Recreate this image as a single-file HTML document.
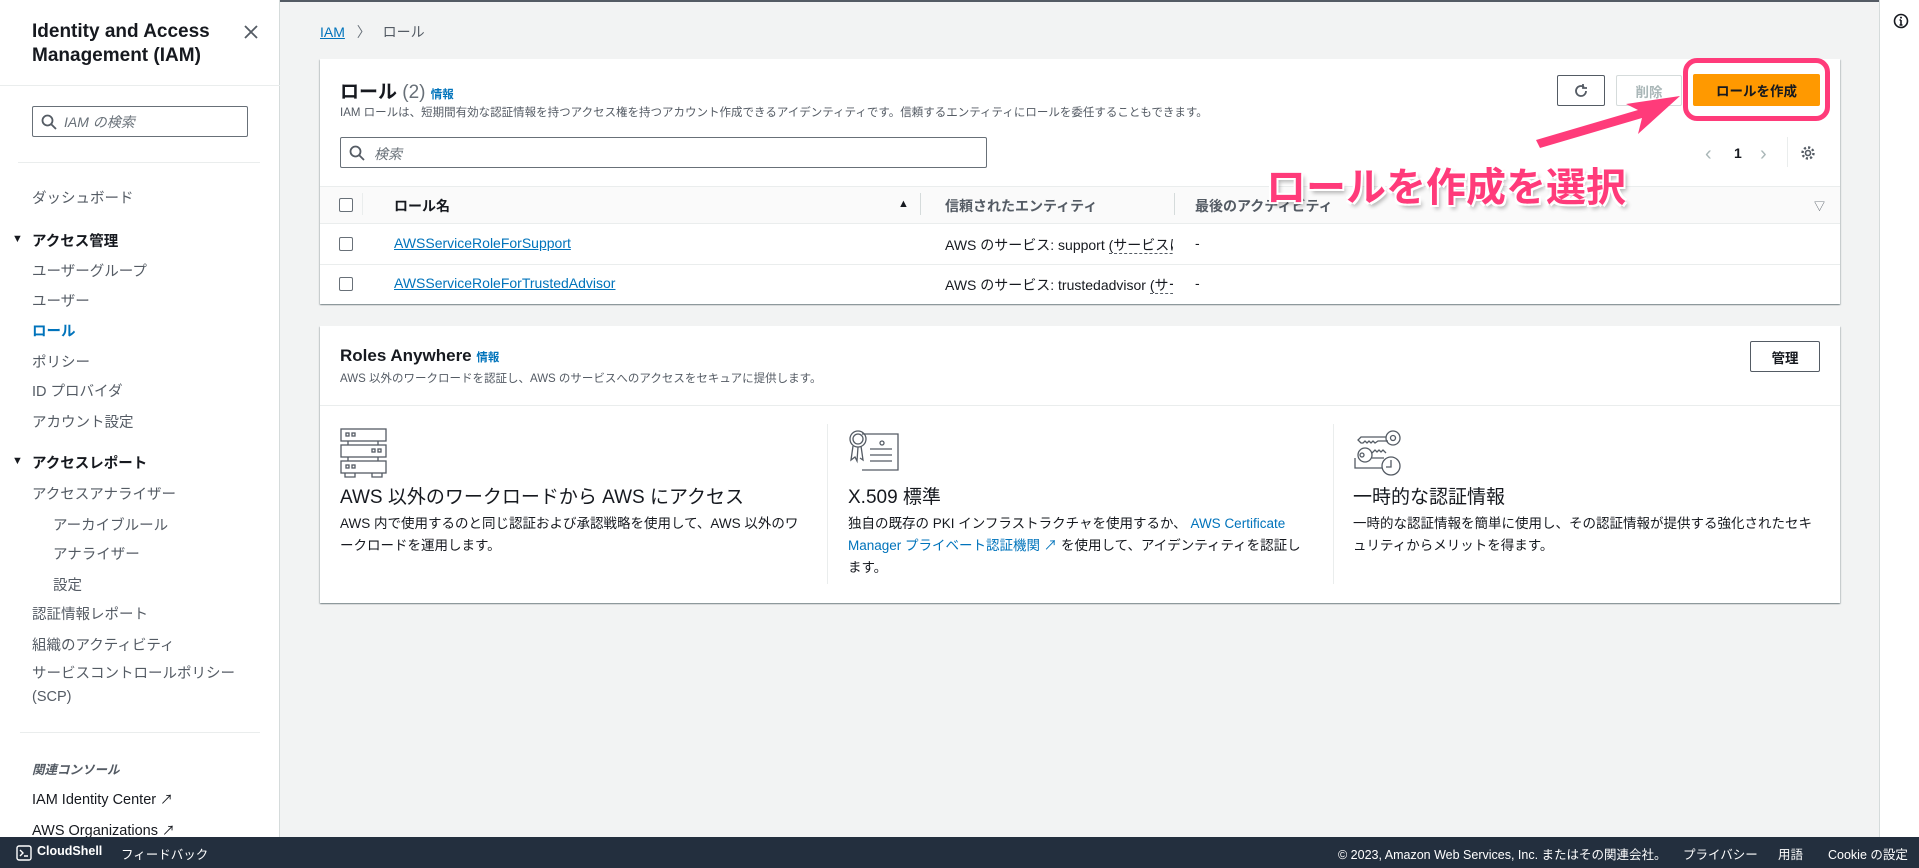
<!DOCTYPE html>
<html><head><meta charset="utf-8"><style>
*{box-sizing:border-box;margin:0;padding:0}
body{width:1919px;height:868px;overflow:hidden;position:relative;background:#f2f3f3;font-family:"Liberation Sans","Noto Sans CJK JP",sans-serif;color:#16191f}
.a{position:absolute;white-space:nowrap}
#side{position:absolute;left:0;top:0;width:280px;height:837px;background:#fff;border-right:1px solid #d5dbdb}
.nav{font-size:14.5px;color:#545b64;left:32px}
.sub{left:53px}
.hd{font-weight:bold;color:#16191f;left:32px}
.tri{left:12px;font-size:11px;color:#16191f}
.card{position:absolute;background:#fff;box-shadow:0 1px 1px rgba(0,28,36,.3),1px 1px 1px rgba(0,28,36,.15),-1px 1px 1px rgba(0,28,36,.15)}
.hline{position:absolute;height:1px;background:#eaeded}
.cb{position:absolute;width:14px;height:14px;border:1.5px solid #687078;border-radius:2px;background:#fff}
.link{color:#0073bb;text-decoration:underline}
.btn{position:absolute;border:1px solid #545b64;background:#fff;border-radius:2px;font-weight:bold;font-size:13.5px;display:flex;align-items:center;justify-content:center}
.desc{font-size:12px;color:#545b64}
.t{font-size:19px;color:#16191f}
.b{font-size:13.5px;line-height:22px;color:#16191f;white-space:normal}
</style></head><body>
<div style="position:absolute;left:0;top:0;width:1919px;height:2px;background:#545b64"></div>
<div id="side">
<div class="a" style="left:32px;top:20px;font-size:19px;font-weight:bold;line-height:24px">Identity and Access<br>Management (IAM)</div>
<svg class="a" style="left:243px;top:24px" width="16" height="16" viewBox="0 0 16 16"><path d="M2 2L14 14M14 2L2 14" stroke="#545b64" stroke-width="1.8"/></svg>
<div class="hline" style="left:0;top:85px;width:280px"></div>
<div class="a" style="left:32px;top:106px;width:216px;height:31px;border:1px solid #687078;border-radius:2px"></div>
<svg class="a" style="left:41px;top:114px" width="16" height="16" viewBox="0 0 16 16"><circle cx="6.5" cy="6.5" r="5" fill="none" stroke="#545b64" stroke-width="1.8"/><path d="M10 10L15 15" stroke="#545b64" stroke-width="1.8"/></svg>
<div class="a" style="left:64px;top:112px;font-size:14px;font-style:italic;color:#687078">IAM の検索</div>
<div class="hline" style="left:18px;top:162px;width:242px"></div>
<div class="a nav" style="top:187px">ダッシュボード</div>
<div class="a tri" style="top:233px">▼</div><div class="a nav hd" style="top:230px">アクセス管理</div>
<div class="a nav" style="top:260px">ユーザーグループ</div>
<div class="a nav" style="top:290px">ユーザー</div>
<div class="a nav" style="top:320px;color:#0073bb;font-weight:bold">ロール</div>
<div class="a nav" style="top:351px">ポリシー</div>
<div class="a nav" style="top:380px">ID プロバイダ</div>
<div class="a nav" style="top:411px">アカウント設定</div>
<div class="a tri" style="top:455px">▼</div><div class="a nav hd" style="top:452px">アクセスレポート</div>
<div class="a nav" style="top:483px">アクセスアナライザー</div>
<div class="a nav sub" style="top:514px">アーカイブルール</div>
<div class="a nav sub" style="top:543px">アナライザー</div>
<div class="a nav sub" style="top:574px">設定</div>
<div class="a nav" style="top:603px">認証情報レポート</div>
<div class="a nav" style="top:634px">組織のアクティビティ</div>
<div class="a nav" style="top:663px;line-height:23px">サービスコントロールポリシー<br>(SCP)</div>
<div class="hline" style="left:20px;top:732px;width:240px"></div>
<div class="a nav" style="top:759px;font-size:12.5px;font-style:italic;font-weight:bold">関連コンソール</div>
<div class="a nav" style="top:789px;color:#16191f">IAM Identity Center <span style="font-size:13px">↗</span></div>
<div class="a nav" style="top:820px;color:#16191f">AWS Organizations <span style="font-size:13px">↗</span></div>
</div>

<div class="a" style="left:320px;top:22px;font-size:14px"><span class="link">IAM</span> <span style="color:#687078;margin:0 8px">〉</span> <span style="color:#545b64">ロール</span></div>

<!-- card 1 -->
<div class="card" style="left:320px;top:59px;width:1520px;height:245px">
<div class="a" style="left:20px;top:18px;font-size:19px;font-weight:bold">ロール <span style="font-weight:normal;color:#687078">(2)</span> <span style="font-size:11.5px;color:#0073bb">情報</span></div>
<div class="a desc" style="left:20px;top:45px;font-size:11.5px">IAM ロールは、短期間有効な認証情報を持つアクセス権を持つアカウント作成できるアイデンティティです。信頼するエンティティにロールを委任することもできます。</div>
<div class="a" style="left:20px;top:78px;width:647px;height:31px;border:1px solid #687078;border-radius:2px"></div>
<svg class="a" style="left:29px;top:86px" width="16" height="16" viewBox="0 0 16 16"><circle cx="6.5" cy="6.5" r="5" fill="none" stroke="#545b64" stroke-width="1.8"/><path d="M10 10L15 15" stroke="#545b64" stroke-width="1.8"/></svg>
<div class="a" style="left:54px;top:85px;font-size:14px;font-style:italic;color:#687078">検索</div>
<div class="a" style="left:1385px;top:84px;font-size:20px;color:#aab7b8">‹</div>
<div class="a" style="left:1414px;top:86px;font-size:14px;font-weight:bold">1</div>
<div class="a" style="left:1440px;top:84px;font-size:20px;color:#aab7b8">›</div>
<div class="a" style="left:1467px;top:78px;width:1px;height:30px;background:#eaeded"></div>
<svg class="a" style="left:1480px;top:86px" width="16" height="16" viewBox="0 0 16 16"><circle cx="8" cy="8" r="2.5" fill="none" stroke="#545b64" stroke-width="1.6"/><circle cx="8" cy="8" r="5.5" fill="none" stroke="#545b64" stroke-width="2.4" stroke-dasharray="2.2 2.1"/></svg>
<div class="a" style="left:0;top:127px;width:1520px;height:38px;background:#fafafa;border-top:1px solid #eaeded;border-bottom:1px solid #eaeded"></div>
<div class="cb" style="left:19px;top:139px"></div>
<div class="a" style="left:42px;top:134px;width:1px;height:22px;background:#eaeded"></div>
<div class="a" style="left:74px;top:137px;font-size:14px;font-weight:bold">ロール名</div>
<div class="a" style="left:578px;top:139px;font-size:11px">▲</div>
<div class="a" style="left:600px;top:134px;width:1px;height:22px;background:#d5dbdb"></div>
<div class="a" style="left:625px;top:137px;font-size:14px;font-weight:bold;color:#545b64">信頼されたエンティティ</div>
<div class="a" style="left:854px;top:134px;width:1px;height:22px;background:#d5dbdb"></div>
<div class="a" style="left:875px;top:137px;font-size:14px;font-weight:bold;color:#545b64">最後のアクティビティ</div>
<div class="a" style="left:1494px;top:139px;font-size:11px;color:#545b64">▽</div>
<div class="cb" style="left:19px;top:178px"></div>
<div class="a link" style="left:74px;top:176px;font-size:14px">AWSServiceRoleForSupport</div>
<div class="a" style="left:625px;top:176px;font-size:14px;width:228px;overflow:hidden">AWS のサービス: support <span style="border-bottom:1px dashed #545b64">(サービスにリンクされたロール)</span></div>
<div class="a" style="left:875px;top:176px;font-size:14px">-</div>
<div class="hline" style="left:0;top:205px;width:1520px"></div>
<div class="cb" style="left:19px;top:218px"></div>
<div class="a link" style="left:74px;top:216px;font-size:14px">AWSServiceRoleForTrustedAdvisor</div>
<div class="a" style="left:625px;top:216px;font-size:14px;width:228px;overflow:hidden">AWS のサービス: trustedadvisor <span style="border-bottom:1px dashed #545b64">(サービスにリンクされたロール)</span></div>
<div class="a" style="left:875px;top:216px;font-size:14px">-</div>
</div>
<div class="btn" style="left:1557px;top:75px;width:48px;height:31px"><svg width="18" height="18" viewBox="0 0 18 18"><path d="M14 9a5 5 0 1 1-2-4" fill="none" stroke="#545b64" stroke-width="1.8"/><path d="M11 2v4h4" fill="none" stroke="#545b64" stroke-width="1.8"/></svg></div>
<div class="btn" style="left:1616px;top:75px;width:66px;height:31px;border-color:#d5dbdb;color:#aab7b8">削除</div>
<div class="btn" style="left:1693px;top:74px;width:127px;height:32px;background:#ff9900;border-color:#ff9900;color:#16191f">ロールを作成</div>
<div class="a" style="left:1683px;top:58px;width:147px;height:63px;border:5px solid #ff3b7a;border-radius:14px"></div>
<svg class="a" style="left:1530px;top:88px" width="170" height="70" viewBox="0 0 170 70"><path d="M10 60L112 30L108 46L150 8L96 16L108 22L6 52Z" fill="#ff3b7a"/></svg>
<div class="a" style="left:1266px;top:155px;font-size:40px;font-weight:bold;color:#ff3b7a;text-shadow:2px 2px 0 #fff,-2px -2px 0 #fff,2px -2px 0 #fff,-2px 2px 0 #fff,3px 4px 4px rgba(0,0,0,.3)">ロールを作成を選択</div>

<!-- card 2 -->
<div class="card" style="left:320px;top:326px;width:1520px;height:277px">
<div class="a" style="left:20px;top:20px;font-size:17px;font-weight:bold">Roles Anywhere <span style="font-size:11.5px;color:#0073bb">情報</span></div>
<div class="a desc" style="left:20px;top:44px;font-size:11.5px">AWS 以外のワークロードを認証し、AWS のサービスへのアクセスをセキュアに提供します。</div>
<div class="btn" style="left:1430px;top:15px;width:70px;height:31px">管理</div>
<div class="a" style="left:0;top:79px;width:1520px;height:1px;background:#eaeded"></div>
<div class="a" style="left:507px;top:98px;width:1px;height:160px;background:#eaeded"></div>
<div class="a" style="left:1013px;top:98px;width:1px;height:160px;background:#eaeded"></div>
<svg class="a" style="left:20px;top:102px" width="48" height="50" viewBox="0 0 48 50"><g fill="none" stroke="#545b64" stroke-width="1.3"><rect x="1" y="1" width="45" height="12"/><rect x="1" y="17" width="45" height="12"/><rect x="1" y="33" width="45" height="12"/><path d="M8 13v4M38 13v4M8 29v4M38 29v4M5 45v4h10v-4M32 45v4h10v-4"/><rect x="6" y="5" width="3" height="3"/><rect x="12" y="5" width="3" height="3"/><rect x="32" y="21" width="3" height="3"/><rect x="38" y="21" width="3" height="3"/><rect x="6" y="37" width="3" height="3"/><rect x="12" y="37" width="3" height="3"/></g></svg>
<svg class="a" style="left:528px;top:103px" width="52" height="44" viewBox="0 0 52 44"><g fill="none" stroke="#545b64" stroke-width="1.3"><path d="M14 5h36v36H14"/><circle cx="10" cy="10" r="8"/><circle cx="10" cy="10" r="5"/><path d="M5 17l-2 14 4-3 2 4 1-14M13 17l2 14-3-2"/><path d="M22 20h22M22 26h22M22 32h22"/><circle cx="34" cy="14" r="2"/></g></svg>
<svg class="a" style="left:1033px;top:102px" width="52" height="50" viewBox="0 0 52 50"><g fill="none" stroke="#545b64" stroke-width="1.3"><circle cx="40" cy="10" r="7"/><circle cx="40" cy="10" r="2.5"/><path d="M33 9H8l-3 3 3 3h2l2-2 2 2 2-2 2 2 2-2 2 2 3-2h10"/><circle cx="12" cy="27" r="7"/><circle cx="9" cy="27" r="2"/><path d="M19 25l3-3 2 2 2-2 2 2 2-2 3 3M19 30h12"/><circle cx="38" cy="38" r="9"/><path d="M38 32v7h-5"/><path d="M2 30v10h27"/></g></svg>
<div class="a t" style="left:20px;top:156px">AWS 以外のワークロードから AWS にアクセス</div>
<div class="a b" style="left:20px;top:187px;width:470px">AWS 内で使用するのと同じ認証および承認戦略を使用して、AWS 以外のワークロードを運用します。</div>
<div class="a t" style="left:528px;top:156px">X.509 標準</div>
<div class="a b" style="left:528px;top:187px;width:460px">独自の既存の PKI インフラストラクチャを使用するか、 <span style="color:#0073bb">AWS Certificate Manager プライベート認証機関 ↗</span> を使用して、アイデンティティを認証します。</div>
<div class="a t" style="left:1033px;top:156px">一時的な認証情報</div>
<div class="a b" style="left:1033px;top:187px;width:460px">一時的な認証情報を簡単に使用し、その認証情報が提供する強化されたセキュリティからメリットを得ます。</div>
</div>

<!-- right panel -->
<div class="a" style="left:1879px;top:0;width:40px;height:837px;background:#fff;border-left:1px solid #d5dbdb"></div>
<svg class="a" style="left:1893px;top:13px" width="16" height="16" viewBox="0 0 16 16"><circle cx="8" cy="8" r="6.5" fill="none" stroke="#16191f" stroke-width="1.6"/><path d="M8 7v5M6.5 12h3M6.5 7H8" stroke="#16191f" stroke-width="1.6"/><circle cx="8" cy="4.6" r="1" fill="#16191f"/></svg>

<!-- footer -->
<div class="a" style="left:0;top:837px;width:1919px;height:31px;background:#232f3e;color:#fff;font-size:12.5px">
<svg class="a" style="left:16px;top:8px" width="16" height="16" viewBox="0 0 16 16"><rect x="1" y="1" width="14" height="14" rx="2" fill="none" stroke="#fff" stroke-width="1.4"/><path d="M4 5l3 3-3 3M8 11h4" stroke="#fff" stroke-width="1.4" fill="none"/></svg>
<div class="a" style="left:37px;top:7px;font-weight:bold">CloudShell</div>
<div class="a" style="left:121px;top:7px">フィードバック</div>
<div class="a" style="left:1338px;top:7px">© 2023, Amazon Web Services, Inc. またはその関連会社。</div>
<div class="a" style="left:1683px;top:7px">プライバシー</div>
<div class="a" style="left:1778px;top:7px">用語</div>
<div class="a" style="left:1828px;top:7px">Cookie の設定</div>
</div>
</body></html>
